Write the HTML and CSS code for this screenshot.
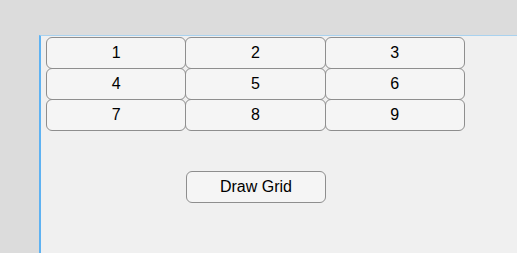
FILE: index.html
```html
<!DOCTYPE html>
<html>
<head>
<meta charset="utf-8">
<link rel="stylesheet" href="styles.css">
</head>
<body>
<div class="panel">
  <div class="grid">
    <button class="cell">1</button>
    <button class="cell">2</button>
    <button class="cell">3</button>
    <button class="cell">4</button>
    <button class="cell">5</button>
    <button class="cell">6</button>
    <button class="cell">7</button>
    <button class="cell">8</button>
    <button class="cell">9</button>
  </div>
  <div class="actions">
    <button class="draw">Draw Grid</button>
  </div>
</div>
</body>
</html>
```
FILE: styles.css
```css
html, body {
  margin: 0;
  padding: 0;
  height: 100%;
  background: #dcdcdc;
  overflow: hidden;
}
.panel {
  margin: 35px 0 0 39px;
  height: calc(100% - 35px);
  background: #f0f0f0;
  border-top: 1px solid #a9d2ef;
  border-left: 2px solid #5eb2f2;
  padding: 1px 0 0 5px;
  box-sizing: border-box;
}
.grid {
  display: grid;
  grid-template-columns: 139.3px 139.3px 139.3px;
  grid-auto-rows: 31px;
  width: 418px;
}
.cell, .draw {
  font-family: "Liberation Sans", Arial, sans-serif;
  font-size: 16px;
  color: #000;
  background: #f5f5f5;
  border: 1px solid #8e8e8e;
  border-radius: 6px;
  padding: 0;
  margin: 0;
  box-sizing: border-box;
}
.cell {
  width: 140.3px;
  height: 32px;
}
.actions {
  padding: 41px 0 0 140px;
}
.draw {
  width: 140px;
  height: 32px;
}
```
